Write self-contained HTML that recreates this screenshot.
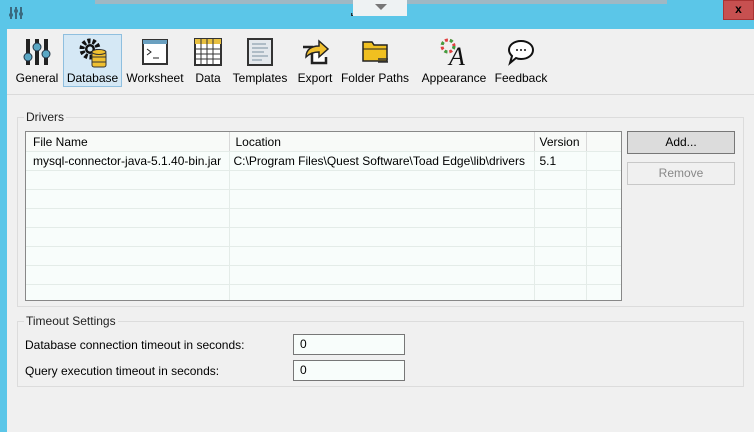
<!DOCTYPE html>
<html><head><meta charset="utf-8"><style>
*{margin:0;padding:0;box-sizing:border-box}
body{width:754px;height:432px;overflow:hidden;background:#5bc6e8;font-family:"Liberation Sans",sans-serif;font-size:12px;color:#000;position:relative}
.abs{position:absolute}
.win{left:7px;top:29px;width:747px;height:403px;background:#f0f0f0}
.btn{position:absolute;top:34px;height:53px;text-align:center;font-size:12px}
.btn span{position:absolute;left:0;right:0;top:37px;white-space:nowrap}
.btn svg{position:absolute;top:3px;left:50%;margin-left:-15px}
.grp{border:1px solid #dcdcdc;position:absolute}
.legend{position:absolute;background:#f0f0f0;padding:0 2px;font-size:12px;color:#222}
table{border-collapse:collapse}
td{border-right:1px solid #e4ece8;border-bottom:1px solid #e4ece8;white-space:nowrap;padding-top:1px}
</style></head><body>
<div class="abs" style="left:95px;top:0;width:572px;height:4px;background:#9fb8c4"></div>
<div class="abs" style="left:350px;top:4px;font-size:13px;color:#222;width:70px;height:16px;overflow:hidden;clip-path:inset(9px 0 0 0)">Database</div>
<div class="abs" style="left:353px;top:0;width:54px;height:16px;background:#eef2f3"></div>
<div class="abs" style="left:375px;top:4px;width:0;height:0;border-left:6px solid transparent;border-right:6px solid transparent;border-top:6px solid #777"></div>
<svg class="abs" style="left:9px;top:7px" width="14" height="12"><g fill="#3a6a80"><rect x="1" y="0" width="2" height="12"/><rect x="6" y="0" width="2" height="12"/><rect x="11" y="0" width="2" height="12"/><circle cx="2" cy="8" r="2"/><circle cx="7" cy="4" r="2"/><circle cx="12" cy="7" r="2"/></g></svg>
<div class="abs" style="left:723px;top:0;width:31px;height:20px;background:#c75050;border:1px solid #a33;color:#000;font-weight:bold;font-size:12px;text-align:center;line-height:17px">x</div>

<div class="abs win"></div>
<div class="abs" style="left:7px;top:94px;width:747px;height:1px;background:#dadada"></div>

<div class="btn" style="left:14px;width:46px"><svg width="30" height="30"><g fill="#222"><rect x="4" y="2" width="4" height="26"/><rect x="13" y="2" width="4" height="26"/><rect x="22" y="2" width="4" height="26"/></g><g fill="#5aa7c4" stroke="#234" stroke-width="1"><circle cx="6" cy="20" r="4"/><circle cx="15" cy="10" r="4"/><circle cx="24" cy="17" r="4"/></g></svg><span>General</span></div>
<div class="btn" style="left:63px;width:59px;background:#d5e8f5;border:1px solid #8fbfdf"><svg width="30" height="30"><circle cx="12" cy="11" r="8" fill="none" stroke="#111" stroke-width="5" stroke-dasharray="3 2"/><circle cx="12" cy="11" r="5" fill="#111"/><circle cx="12" cy="11" r="2.5" fill="#d5e8f5"/><g fill="#f0c030" stroke="#333"><rect x="14" y="14" width="14" height="15" rx="2"/><ellipse cx="21" cy="14" rx="7" ry="2.5"/></g><path d="M14 19h14M14 24h14" stroke="#333"/></svg><span style="top:36px">Database</span></div>
<div class="btn" style="left:125px;width:60px"><svg width="30" height="30"><rect x="3" y="3" width="24" height="24" fill="#fff" stroke="#333" stroke-width="2"/><rect x="3" y="3" width="24" height="4" fill="#6aa0c0"/><path d="M7 12l4 3-4 3M13 21h6" stroke="#222" fill="none"/></svg><span>Worksheet</span></div>
<div class="btn" style="left:190px;width:36px"><svg width="30" height="30"><rect x="2" y="2" width="26" height="26" fill="#fff" stroke="#333" stroke-width="2"/><rect x="2" y="2" width="26" height="5" fill="#e8c040"/><path d="M2 12h26M2 17h26M2 22h26M8 2v26M14 2v26M20 2v26" stroke="#333"/></svg><span>Data</span></div>
<div class="btn" style="left:230px;width:60px"><svg width="30" height="30"><rect x="3" y="2" width="24" height="26" fill="#e4e8ec" stroke="#333" stroke-width="2"/><path d="M7 7h14M7 11h16M7 15h12M7 19h16M7 23h10" stroke="#7a8fa0"/></svg><span>Templates</span></div>
<div class="btn" style="left:295px;width:40px"><svg width="30" height="30"><path d="M3 10h9v16h14v-6" fill="#fff" stroke="#222" stroke-width="2.5"/><path d="M6 20c0-8 6-11 13-11V4l9 8-9 8v-5c-6 0-10 2-13 5z" fill="#f0c030" stroke="#222" stroke-width="1.5"/></svg><span>Export</span></div>
<div class="btn" style="left:340px;width:70px"><svg width="30" height="30"><path d="M3 5h9l2 3h13v16H3z" fill="#f0c020" stroke="#222" stroke-width="1.5"/><path d="M3 12h24" stroke="#222"/><path d="M18 22h10M18 25h10" stroke="#333" stroke-width="1.5"/></svg><span>Folder Paths</span></div>
<div class="btn" style="left:418px;width:72px"><svg width="30" height="30"><circle cx="9" cy="9" r="6" fill="none" stroke="#e04040" stroke-width="3" stroke-dasharray="3 2"/><circle cx="9" cy="9" r="6" fill="none" stroke="#40a040" stroke-width="3" stroke-dasharray="3 7"/><text x="10" y="28" font-family="Liberation Serif" font-style="italic" font-size="26" fill="#111">A</text></svg><span>Appearance</span></div>
<div class="btn" style="left:494px;width:54px"><svg width="30" height="30"><path d="M15 4c7 0 12 4 12 9s-5 9-12 9c-2 0-3 0-5-1l-6 5 2-7c-2-2-3-4-3-6 0-5 5-9 12-9z" fill="#fff" stroke="#111" stroke-width="2"/><circle cx="11" cy="13" r="1" fill="#111"/><circle cx="15" cy="13" r="1" fill="#111"/><circle cx="19" cy="13" r="1" fill="#111"/></svg><span>Feedback</span></div>

<div class="grp" style="left:17px;top:117px;width:727px;height:190px"></div>
<div class="legend" style="left:24px;top:110px">Drivers</div>
<div class="abs" style="left:25px;top:131px;width:597px;height:170px;background:#f8fdfb;border:1px solid #888;overflow:hidden">
<table style="font-size:12px;table-layout:fixed;width:596px">
<colgroup><col style="width:203px"><col style="width:305px"><col style="width:52px"><col></colgroup>
<tr style="height:19px;background:#f8faf8"><td style="padding-left:7px;border-right-color:#d8d8d8">File Name</td><td style="padding-left:6px;border-right-color:#d8d8d8">Location</td><td style="padding-left:5px;border-right-color:#d8d8d8">Version</td><td style="border-right:none"></td></tr>
<tr style="height:19px"><td style="padding-left:7px">mysql-connector-java-5.1.40-bin.jar</td><td style="padding-left:4px;overflow:hidden">C:\Program Files\Quest Software\Toad Edge\lib\drivers</td><td style="padding-left:5px">5.1</td><td style="border-right:none"></td></tr>
<tr style="height:19px"><td></td><td></td><td></td><td style="border-right:none"></td></tr>
<tr style="height:19px"><td></td><td></td><td></td><td style="border-right:none"></td></tr>
<tr style="height:19px"><td></td><td></td><td></td><td style="border-right:none"></td></tr>
<tr style="height:19px"><td></td><td></td><td></td><td style="border-right:none"></td></tr>
<tr style="height:19px"><td></td><td></td><td></td><td style="border-right:none"></td></tr>
<tr style="height:19px"><td></td><td></td><td></td><td style="border-right:none"></td></tr>
<tr style="height:19px"><td style="border-bottom:none"></td><td style="border-bottom:none"></td><td style="border-bottom:none"></td><td style="border:none"></td></tr>
</table></div>
<div class="abs" style="left:627px;top:131px;width:108px;height:23px;background:#dcdcdc;border:1px solid #777;text-align:center;line-height:21px">Add...</div>
<div class="abs" style="left:627px;top:162px;width:108px;height:23px;background:#f0f0f0;border:1px solid #c8c8c8;text-align:center;line-height:21px;color:#888">Remove</div>

<div class="grp" style="left:17px;top:321px;width:727px;height:66px"></div>
<div class="legend" style="left:24px;top:314px">Timeout Settings</div>
<div class="abs" style="left:25px;top:338px;font-size:12px">Database connection timeout in seconds:</div>
<div class="abs" style="left:25px;top:364px;font-size:12px">Query execution timeout in seconds:</div>
<div class="abs" style="left:293px;top:334px;width:112px;height:21px;background:#f8fdfb;border:1px solid #777;padding-left:6px;line-height:19px;font-size:12px">0</div>
<div class="abs" style="left:293px;top:360px;width:112px;height:21px;background:#f8fdfb;border:1px solid #777;padding-left:6px;line-height:19px;font-size:12px">0</div>
</body></html>
